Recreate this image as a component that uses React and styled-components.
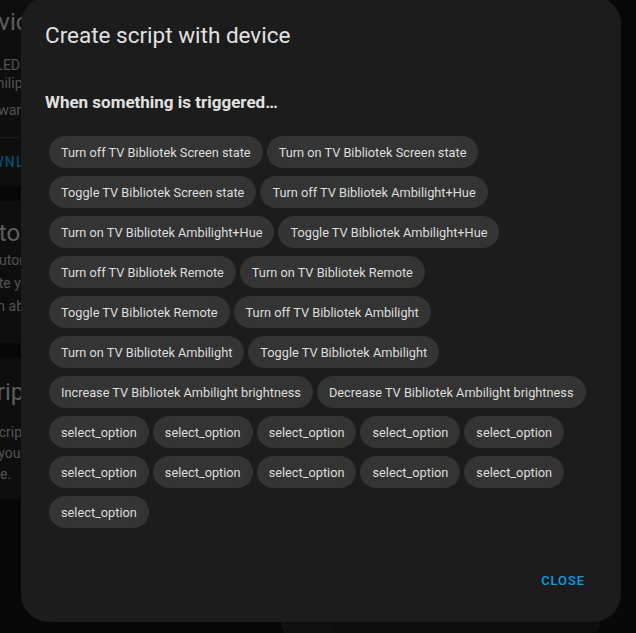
import React from "react";
import styled, { createGlobalStyle } from "styled-components";

const GlobalStyle = createGlobalStyle`
  html, body {
    margin: 0;
    padding: 0;
    background: #0c0c0c;
    font-family: Roboto, "Noto Sans", sans-serif;
    overflow: hidden;
  }
`;

const triggers = [
  "Turn off TV Bibliotek Screen state",
  "Turn on TV Bibliotek Screen state",
  "Toggle TV Bibliotek Screen state",
  "Turn off TV Bibliotek Ambilight+Hue",
  "Turn on TV Bibliotek Ambilight+Hue",
  "Toggle TV Bibliotek Ambilight+Hue",
  "Turn off TV Bibliotek Remote",
  "Turn on TV Bibliotek Remote",
  "Toggle TV Bibliotek Remote",
  "Turn off TV Bibliotek Ambilight",
  "Turn on TV Bibliotek Ambilight",
  "Toggle TV Bibliotek Ambilight",
  "Increase TV Bibliotek Ambilight brightness",
  "Decrease TV Bibliotek Ambilight brightness",
  ...Array(11).fill("select_option"),
];

// --- dimmed dashboard behind the dialog ---

const Page = styled.div`
  width: 636px;
  height: 633px;
  display: flex;
  gap: 16px;
  overflow: hidden;
`;

const Column = styled.div`
  display: flex;
  flex-direction: column;
  gap: 15px;
  width: ${(p) => p.width}px;
  margin-left: ${(p) => p.offset || 0}px;
  margin-top: ${(p) => p.top || 0}px;
  flex-shrink: 0;
`;

const Card = styled.div`
  background: #151515;
  border-radius: 8px;
  display: flex;
  flex-direction: column;
  padding-bottom: ${(p) => p.pb || 0}px;
`;

const CardTitle = styled.div`
  font-size: 24px;
  line-height: 32px;
  color: #8a8a8a;
  padding: ${(p) => p.pt}px 16px ${(p) => p.pb}px;
`;

const CardText = styled.div`
  font-size: 14px;
  line-height: ${(p) => p.lh || 20}px;
  color: #7a7a7a;
  padding: 0 16px;
  white-space: nowrap;
`;

const CardActions = styled.div`
  border-top: 1px solid #262626;
  margin-top: 9px;
  padding: 14px 16px;
  font-size: 14px;
  line-height: 20px;
  font-weight: 500;
  letter-spacing: 1.25px;
  color: #0a6f9c;
`;

const ListCard = styled.div`
  background: #161616;
  border-left: 1px solid #252525;
  border-radius: 8px;
  height: 700px;
  display: flex;
  align-items: flex-end;
`;

const ListRow = styled.div`
  display: flex;
  align-items: center;
  width: 100%;
  height: 40px;
  margin-bottom: -28px;
  color: #555;
  font-size: 13px;
`;

const ListIcon = styled.div`
  width: 48px;
  height: 100%;
  display: flex;
  align-items: center;
  justify-content: center;
  border-right: 1px solid #1c1c1c;
  background: #181818;
`;

// --- dialog ---

const Scrim = styled.div`
  position: fixed;
  inset: 0;
  background: rgba(0, 0, 0, 0.32);
`;

const Dialog = styled.div`
  position: fixed;
  left: 21px;
  top: -4px;
  width: 600px;
  height: 626px;
  box-sizing: border-box;
  background: #1c1c1c;
  border-radius: 28px;
  padding: 25px 24px 24px;
  display: flex;
  flex-direction: column;
`;

const Title = styled.h2`
  margin: 0;
  font-size: 22.5px;
  line-height: 28px;
  font-weight: 400;
  color: #e1e1e1;
`;

const Section = styled.h3`
  margin: 41px 0 0;
  font-size: 17px;
  line-height: 24px;
  font-weight: 700;
  color: #e1e1e1;
`;

const Chips = styled.div`
  display: flex;
  flex-wrap: wrap;
  gap: 8px 4px;
  margin-top: 22px;
  padding-left: 4px;
`;

const Chip = styled.button`
  height: 32px;
  padding: 0 12px;
  border: none;
  border-radius: 16px;
  background: #343434;
  color: #dedede;
  font-family: Roboto, sans-serif;
  font-size: 12.75px;
  white-space: nowrap;
  cursor: pointer;
`;

const Actions = styled.div`
  margin-top: auto;
  display: flex;
  justify-content: flex-end;
`;

const TextButton = styled.button`
  height: 36px;
  padding: 0 12px;
  border: none;
  background: transparent;
  color: #0b9fe3;
  font-family: Roboto, sans-serif;
  font-size: 13px;
  font-weight: 500;
  letter-spacing: 0.9px;
  cursor: pointer;
`;

export default function App() {
  return (
    <>
      <GlobalStyle />
      <Page>
        <Column width={320} offset={-46} top={-18}>
          <Card>
            <CardTitle pt={24} pb={18}>Device info</CardTitle>
            <CardText lh={18}>65OLED855/12</CardText>
            <CardText lh={18}>by Philips</CardText>
            <CardText lh={36}>Firmware: TPM191E</CardText>
            <CardActions>DOWNLOAD DIAGNOSTICS</CardActions>
          </Card>
          <Card pb={25}>
            <CardTitle pt={16} pb={0}>Automations</CardTitle>
            <CardText lh={23}>No automations using this device</CardText>
            <CardText lh={23}>Create yet another automation</CardText>
            <CardText lh={23}>Learn about automations.</CardText>
          </Card>
          <Card pb={14}>
            <CardTitle pt={18} pb={14}>Scripts</CardTitle>
            <CardText lh={21}>No scripts using this device</CardText>
            <CardText lh={21}>And you can add one</CardText>
            <CardText lh={21}>above.</CardText>
          </Card>
        </Column>
        <Column width={318} offset={-8}>
          <ListCard>
            <ListRow>
              <ListIcon>
                <svg width="18" height="18" viewBox="0 0 24 24" fill="#555">
                  <path d="M3 4h18v2H3zM3 9h12v2H3z" />
                </svg>
              </ListIcon>
              <span style={{ marginLeft: 34 }}>Logbook</span>
            </ListRow>
          </ListCard>
        </Column>
      </Page>
      <Scrim />
      <Dialog>
        <Title>Create script with device</Title>
        <Section>When something is triggered…</Section>
        <Chips>
          {triggers.map((t, i) => (
            <Chip key={i}>{t}</Chip>
          ))}
        </Chips>
        <Actions>
          <TextButton>CLOSE</TextButton>
        </Actions>
      </Dialog>
    </>
  );
}
